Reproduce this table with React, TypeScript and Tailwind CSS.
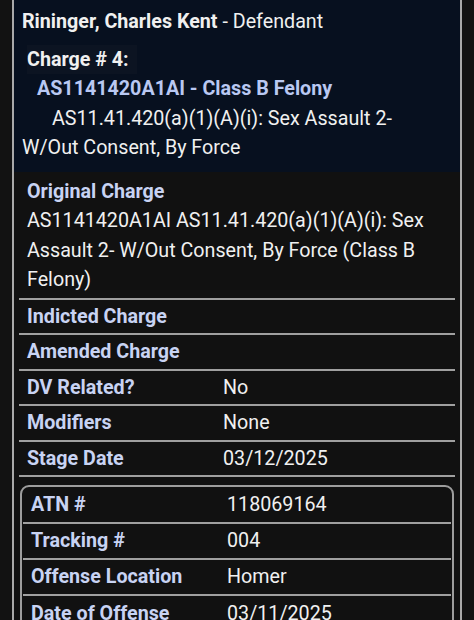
import React from "react";

const outerRows = [
  { label: "Indicted Charge", value: "" },
  { label: "Amended Charge", value: "" },
  { label: "DV Related?", value: "No" },
  { label: "Modifiers", value: "None" },
  { label: "Stage Date", value: "03/12/2025" },
];

const offenseRows = [
  { label: "ATN #", value: "118069164" },
  { label: "Tracking #", value: "004" },
  { label: "Offense Location", value: "Homer" },
  { label: "Date of Offense", value: "03/11/2025" },
];

export default function App() {
  return (
    <div
      className="min-h-[620px] h-[620px] overflow-hidden bg-[#121212] text-[19.7px] leading-[29.5px] text-[#f0f0f0]"
      style={{ fontFamily: "Roboto, 'Noto Sans', sans-serif" }}
    >
      <div className="mx-[12px] h-full border-x-2 border-[#a9a9a9] bg-[#111111]">
        {/* Defendant / charge header */}
        <div className="bg-[#07101f] pl-[8px] pr-4 pt-[7px] pb-[9px]">
          <div>
            <span className="font-bold">Rininger, Charles Kent</span> - Defendant
          </div>
          <div className="mt-[8px] pl-[5px]">
            <span className="inline-block bg-[#0c1422] pr-2 font-bold">Charge # 4:</span>
          </div>
          <div className="pl-[15px] font-bold text-[#b9c8f2]">AS1141420A1AI - Class B Felony</div>
          <p className="indent-[30px]">
            AS11.41.420(a)(1)(A)(i): Sex Assault 2- W/Out Consent, By Force
          </p>
        </div>

        {/* Original charge */}
        <div className="mx-[5px] border-b-2 border-[#a0a0a0] pl-[8px] pr-4 pt-[5px] pb-[3px]">
          <div className="font-bold text-[#c8d3f3]">Original Charge</div>
          <p>
            AS1141420A1AI AS11.41.420(a)(1)(A)(i): Sex Assault 2- W/Out Consent, By Force (Class B
            Felony)
          </p>
        </div>

        {outerRows.map((row) => (
          <div
            key={row.label}
            className="mx-[5px] grid h-[35.5px] grid-cols-[196px_1fr] items-center border-b-2 border-[#a0a0a0] pl-[8px]"
          >
            <div className="font-bold text-[#c8d3f3]">{row.label}</div>
            <div>{row.value}</div>
          </div>
        ))}

        {/* Offense details card */}
        <div className="mx-[6px] mt-[8px] rounded-[9px] border-2 border-[#9d9d9d] pt-[1px]">
          {offenseRows.map((row, i) => (
            <div
              key={row.label}
              className={
                "mx-px grid h-[36px] grid-cols-[196px_1fr] items-center pl-[8px] " +
                (i < offenseRows.length - 1 ? "border-b-2 border-[#a0a0a0]" : "")
              }
            >
              <div className="font-bold text-[#c8d3f3]">{row.label}</div>
              <div>{row.value}</div>
            </div>
          ))}
        </div>
      </div>
    </div>
  );
}
